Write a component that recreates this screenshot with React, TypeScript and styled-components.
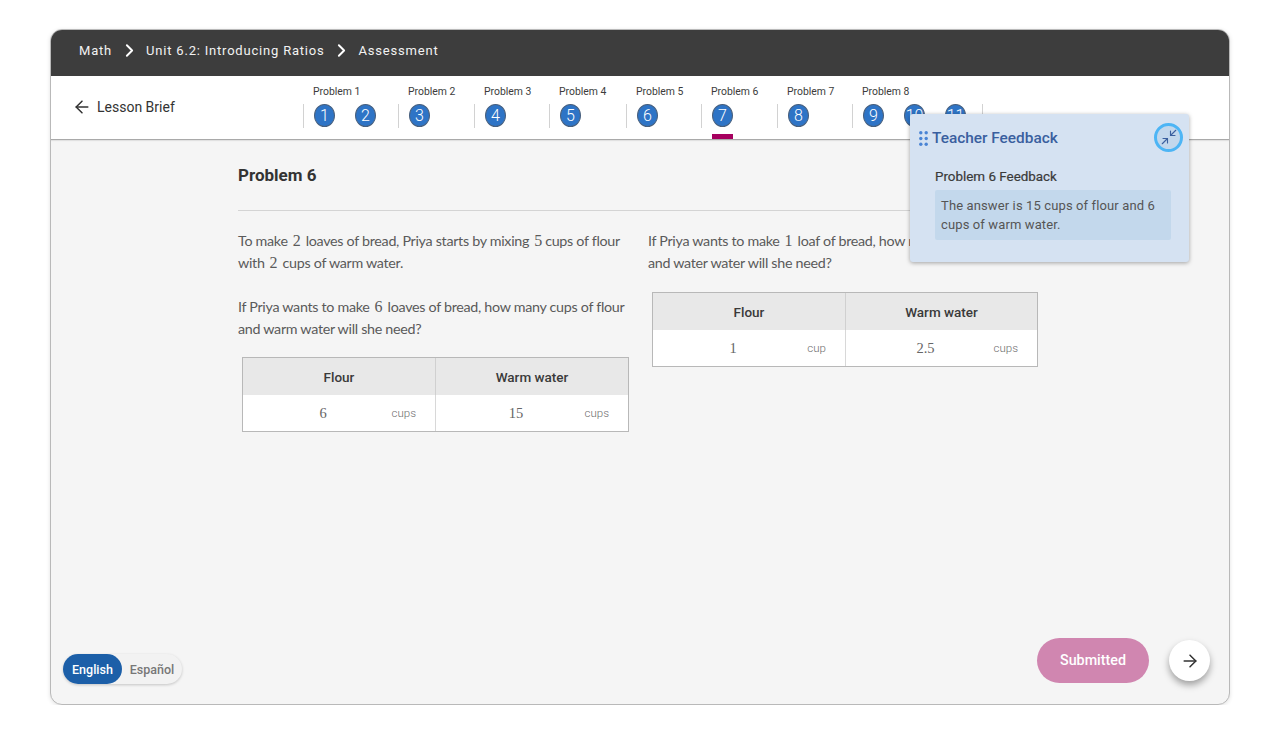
import React from 'react';
import styled, { createGlobalStyle } from 'styled-components';
import { ArrowLeft, ArrowRight, ChevronRight, Minimize2 } from 'lucide-react';

const GlobalStyle = createGlobalStyle`
  html, body {
    margin: 0;
    background: #fff;
    font-family: "Lato", "Liberation Sans", sans-serif;
  }
`;

const Frame = styled.div`
  position: relative;
  box-sizing: border-box;
  width: 1180px;
  height: 676px;
  margin: 29px 50px 0;
  display: flex;
  flex-direction: column;
  background: #f5f5f5;
  border: 1px solid #b9b9b9;
  border-radius: 12px;
  overflow: hidden;
  box-shadow: 0 1px 4px rgba(0, 0, 0, 0.12);
`;

const Breadcrumbs = styled.div`
  height: 46px;
  flex: none;
  box-sizing: border-box;
  padding: 0 0 5px 28px;
  display: flex;
  align-items: center;
  background: #3d3d3d;
  color: #f2f2f2;
  font-family: "Roboto", sans-serif;
  font-size: 13px;
  letter-spacing: 0.8px;
`;

const Crumb = styled.span`
  white-space: nowrap;
`;

const CrumbSep = styled.span`
  display: flex;
  width: 34px;
  justify-content: center;
  color: #fff;
`;

const NavBar = styled.div`
  height: 64px;
  flex: none;
  box-sizing: border-box;
  display: flex;
  background: #fff;
  border-bottom: 1px solid #a9a9a9;
  box-shadow: 0 1px 1px rgba(0, 0, 0, 0.08);
`;

const BackLink = styled.div`
  width: 252px;
  flex: none;
  display: flex;
  align-items: center;
  gap: 5px;
  padding: 0 0 0 21px;
  box-sizing: border-box;
  height: 62px;
  font-family: "Roboto", sans-serif;
  font-size: 14px;
  color: #333;
`;

const Groups = styled.div`
  display: flex;
  padding-top: 9px;
`;

const Group = styled.div<{ $width: number }>`
  position: relative;
  width: ${props => props.$width}px;
  box-sizing: border-box;
`;

const GroupLabel = styled.div`
  height: 12px;
  margin: 1px 0 0 10px;
  font-family: "Roboto", sans-serif;
  font-size: 10.4px;
  line-height: 12px;
  color: #3c3c3c;
  white-space: nowrap;
`;

const Steps = styled.div`
  display: flex;
  gap: 20px;
  height: 24px;
  margin-top: 6px;
  padding-left: 10px;
  border-left: 1px solid #d2d2d2;
`;

const Step = styled.div`
  width: 21px;
  height: 23px;
  flex: none;
  box-sizing: border-box;
  display: flex;
  align-items: center;
  justify-content: center;
  border-radius: 50%;
  background: #2e74c6;
  border: 1px solid #48607e;
  color: #fff;
  font-family: "Roboto", sans-serif;
  font-size: 16px;
  font-weight: 300;
`;

const ActiveMark = styled.div`
  position: absolute;
  left: 11px;
  bottom: 0;
  width: 21px;
  height: 5px;
  background: #a6005f;
`;

const EndRule = styled.div`
  width: 1px;
  height: 24px;
  margin-top: 19px;
  background: #d2d2d2;
`;

const Main = styled.div`
  flex: 1;
  min-height: 0;
  display: flex;
  flex-direction: column;
  padding: 0 19px 20px 12px;
`;

const Content = styled.div`
  width: 802px;
  margin-left: 175px;
  flex: 1;
`;

const Heading = styled.h1`
  margin: 0;
  height: 71px;
  box-sizing: border-box;
  padding-top: 25px;
  border-bottom: 1px solid #d4d4d4;
  font-family: "Roboto", sans-serif;
  font-size: 17px;
  line-height: 20px;
  font-weight: 700;
  color: #333;
`;

const Columns = styled.div`
  display: flex;
  gap: 18px;
  margin-top: 19px;
`;

const Column = styled.div`
  width: 392px;
  flex: none;
`;

const Para = styled.p`
  margin: 0 0 22px;
  font-size: 14.3px;
  line-height: 22px;
  color: #5a5a5a;
  letter-spacing: -0.3px;
`;

const MathNum = styled.span<{ $tight?: boolean }>`
  font-family: "Liberation Serif", serif;
  font-size: 16px;
  padding: 0 ${props => (props.$tight ? '3px' : '5px')} 0 5px;
  letter-spacing: 0;
  color: #5a5a5a;
`;

const RatioTable = styled.div<{ $width: number; $lift: number }>`
  width: ${props => props.$width}px;
  margin: -${props => props.$lift}px 0 0 4px;
  box-sizing: border-box;
  border: 1px solid #b8b8b8;
  display: grid;
  grid-template-columns: 192px 1fr;
`;

const HeadCell = styled.div`
  height: 37px;
  display: flex;
  align-items: center;
  justify-content: center;
  background: #e8e8e8;
  font-family: "Roboto", sans-serif;
  font-size: 13.5px;
  font-weight: 500;
  color: #3a3a3a;
  & + & {
    border-left: 1px solid #d0d0d0;
  }
`;

const ValueCell = styled.div<{ $divider?: boolean }>`
  position: relative;
  height: 36px;
  display: flex;
  align-items: center;
  justify-content: center;
  padding-right: 32px;
  background: #fff;
  font-family: "Liberation Serif", serif;
  font-size: 14.5px;
  color: #666;
  border-left: ${props => (props.$divider ? '1px solid #d8d8d8' : 'none')};
`;

const Unit = styled.span`
  position: absolute;
  right: 19px;
  font-family: "Roboto", sans-serif;
  font-size: 11.5px;
  font-weight: 300;
  color: #6e6e6e;
`;

const Footer = styled.div`
  display: flex;
  align-items: flex-end;
  justify-content: space-between;
`;

const LangToggle = styled.div`
  display: flex;
  align-items: center;
  height: 30px;
  width: 119px;
  border-radius: 15px;
  background: #f2f2f2;
  box-shadow: 0 1px 3px rgba(0, 0, 0, 0.2);
  font-family: "Roboto", sans-serif;
  font-size: 12.5px;
  font-weight: 500;
`;

const LangOption = styled.div<{ $active?: boolean }>`
  height: 30px;
  display: flex;
  align-items: center;
  justify-content: center;
  border-radius: 15px;
  width: ${props => (props.$active ? '59px' : '60px')};
  background: ${props => (props.$active ? '#1c5fa8' : 'transparent')};
  color: ${props => (props.$active ? '#fff' : '#777')};
`;

const Actions = styled.div`
  display: flex;
  align-items: center;
  gap: 20px;
  margin-bottom: 1px;
`;

const SubmitButton = styled.button`
  width: 112px;
  height: 45px;
  padding: 0 0 2px;
  border: none;
  border-radius: 23px;
  background: #d086b0;
  color: #fff;
  font-family: "Roboto", sans-serif;
  font-size: 14.3px;
  font-weight: 500;
`;

const NextButton = styled.button`
  width: 41px;
  height: 41px;
  padding: 0;
  border: none;
  border-radius: 50%;
  display: flex;
  align-items: center;
  justify-content: center;
  background: #fff;
  color: #333;
  box-shadow: 0 4px 7px rgba(0, 0, 0, 0.35);
`;

const FeedbackPanel = styled.aside`
  position: absolute;
  left: 859px;
  top: 84px;
  width: 279px;
  height: 148px;
  box-sizing: border-box;
  padding: 0 18px 0 25px;
  background: #d5e2f2;
  border-radius: 3px;
  box-shadow: 0 1px 4px rgba(0, 0, 0, 0.35);
`;

const PanelHeader = styled.div`
  height: 48px;
  display: flex;
  align-items: center;
  margin-left: -16px;
  margin-right: -12px;
`;

const Grip = styled.svg`
  width: 9px;
  height: 15px;
  margin-right: 4px;
  flex: none;
`;

const PanelTitle = styled.div`
  flex: 1;
  font-family: "Roboto", sans-serif;
  font-size: 15.4px;
  font-weight: 500;
  color: #3a5f9f;
`;

const CollapseButton = styled.button`
  width: 29px;
  height: 29px;
  padding: 0;
  margin-top: -2px;
  box-sizing: border-box;
  border: 3px solid #4db5f5;
  border-radius: 50%;
  display: flex;
  align-items: center;
  justify-content: center;
  background: #c2d7ec;
  color: #3a5f9f;
`;

const PanelSub = styled.div`
  margin-top: 6px;
  font-family: "Roboto", sans-serif;
  font-size: 13.4px;
  line-height: 18px;
  font-weight: 400;
  -webkit-text-stroke: 0.2px #3a3a3a;
  color: #3a3a3a;
`;

const PanelNote = styled.div`
  margin-top: 4px;
  padding: 6px;
  height: 50px;
  box-sizing: border-box;
  background: #c3d8ec;
  border-radius: 2px;
  font-family: "Roboto", sans-serif;
  font-size: 13px;
  line-height: 19px;
  letter-spacing: 0.12px;
  color: #555;
`;

const groups = [
  { label: 'Problem 1', steps: [1, 2], width: 95 },
  { label: 'Problem 2', steps: [3], width: 76 },
  { label: 'Problem 3', steps: [4], width: 75 },
  { label: 'Problem 4', steps: [5], width: 77 },
  { label: 'Problem 5', steps: [6], width: 75 },
  { label: 'Problem 6', steps: [7], width: 76 },
  { label: 'Problem 7', steps: [8], width: 75 },
  { label: 'Problem 8', steps: [9, 10, 11], width: 130 },
];

const App: React.FC = () => {
  return (
    <>
      <GlobalStyle />
      <Frame>
        <Breadcrumbs>
          <Crumb>Math</Crumb>
          <CrumbSep><ChevronRight size={21} strokeWidth={2.2} /></CrumbSep>
          <Crumb>Unit 6.2: Introducing Ratios</Crumb>
          <CrumbSep><ChevronRight size={21} strokeWidth={2.2} /></CrumbSep>
          <Crumb>Assessment</Crumb>
        </Breadcrumbs>
        <NavBar>
          <BackLink>
            <ArrowLeft size={20} strokeWidth={1.8} />
            Lesson Brief
          </BackLink>
          <Groups>
            {groups.map(group => (
              <Group key={group.label} $width={group.width}>
                <GroupLabel>{group.label}</GroupLabel>
                <Steps>
                  {group.steps.map(step => (
                    <Step key={step}>{step}</Step>
                  ))}
                </Steps>
                {group.label === 'Problem 6' && <ActiveMark />}
              </Group>
            ))}
            <EndRule />
          </Groups>
        </NavBar>
        <Main>
          <Content>
            <Heading>Problem 6</Heading>
            <Columns>
              <Column>
                <Para>
                  To make<MathNum>2</MathNum>loaves of bread, Priya starts by mixing<MathNum $tight>5</MathNum>cups of flour with<MathNum>2</MathNum>cups of warm water.
                </Para>
                <Para>
                  If Priya wants to make<MathNum>6</MathNum>loaves of bread, how many cups of flour and warm water will she need?
                </Para>
                <RatioTable $width={387} $lift={5}>
                  <HeadCell>Flour</HeadCell>
                  <HeadCell>Warm water</HeadCell>
                  <ValueCell>6<Unit>cups</Unit></ValueCell>
                  <ValueCell $divider>15<Unit>cups</Unit></ValueCell>
                </RatioTable>
              </Column>
              <Column>
                <Para>
                  If Priya wants to make<MathNum>1</MathNum>loaf of bread, how many cups of flour and water water will she need?
                </Para>
                <RatioTable $width={386} $lift={4}>
                  <HeadCell>Flour</HeadCell>
                  <HeadCell>Warm water</HeadCell>
                  <ValueCell>1<Unit>cup</Unit></ValueCell>
                  <ValueCell $divider>2.5<Unit>cups</Unit></ValueCell>
                </RatioTable>
              </Column>
            </Columns>
          </Content>
          <Footer>
            <LangToggle>
              <LangOption $active>English</LangOption>
              <LangOption>Español</LangOption>
            </LangToggle>
            <Actions>
              <SubmitButton>Submitted</SubmitButton>
              <NextButton><ArrowRight size={20} strokeWidth={1.8} /></NextButton>
            </Actions>
          </Footer>
        </Main>
        <FeedbackPanel>
          <PanelHeader>
            <Grip viewBox="0 0 9 15" fill="#4a84d4">
              <circle cx="1.8" cy="1.8" r="1.7" />
              <circle cx="7.2" cy="1.8" r="1.7" />
              <circle cx="1.8" cy="7.5" r="1.7" />
              <circle cx="7.2" cy="7.5" r="1.7" />
              <circle cx="1.8" cy="13.2" r="1.7" />
              <circle cx="7.2" cy="13.2" r="1.7" />
            </Grip>
            <PanelTitle>Teacher Feedback</PanelTitle>
            <CollapseButton><Minimize2 size={18} strokeWidth={1.5} /></CollapseButton>
          </PanelHeader>
          <PanelSub>Problem 6 Feedback</PanelSub>
          <PanelNote>The answer is 15 cups of flour and 6 cups of warm water.</PanelNote>
        </FeedbackPanel>
      </Frame>
    </>
  );
};

export default App;
